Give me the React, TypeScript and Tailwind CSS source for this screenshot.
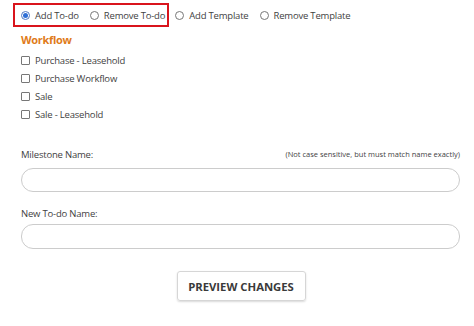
import React from "react";

function Radio({ label, checked }: { label: string; checked?: boolean }) {
  return (
    <label className="flex items-center gap-[5px]">
      <span
        className={
          checked
            ? "w-[9px] h-[9px] rounded-full border border-[#4f78c4] flex items-center justify-center bg-white"
            : "w-[9px] h-[9px] rounded-full border border-[#777] flex items-center justify-center bg-white"
        }
      >
        {checked && <span className="w-[5px] h-[5px] rounded-full bg-[#2f6fd6]" />}
      </span>
      <span>{label}</span>
    </label>
  );
}

function Check({ label }: { label: string }) {
  return (
    <div className="flex items-center gap-[5px] h-[18px]">
      <span className="w-[9px] h-[9px] border border-[#777] rounded-[1px] bg-white" />
      <span>{label}</span>
    </div>
  );
}

export default function App() {
  return (
    <div
      className="w-[474px] h-[326px] bg-white text-[#3f3f3f] text-[9.5px] leading-[15px] tracking-[-0.2px] relative overflow-hidden"
      style={{ fontFamily: '"Open Sans", "Noto Sans", sans-serif' }}
    >
      <div className="flex items-center pt-[3px] pl-[13px] gap-[6px]">
        <div className="flex items-center gap-[11px] border-2 border-[#d9141c] h-[24px] pl-[6px] pr-[2px]">
          <Radio label="Add To-do" checked />
          <Radio label="Remove To-do" />
        </div>
        <div className="flex items-center gap-[11px]">
          <Radio label="Add Template" />
          <Radio label="Remove Template" />
        </div>
      </div>
      <div className="pl-[21px] pr-[14px]">
        <div className="text-[#e07b1a] font-bold text-[11px] tracking-[-0.3px] mt-[4px] leading-[18px]">Workflow</div>
        <div className="mt-[2px]">
          <Check label="Purchase - Leasehold" />
          <Check label="Purchase Workflow" />
          <Check label="Sale" />
          <Check label="Sale - Leasehold" />
        </div>
        <div className="flex items-center justify-between mt-[24px] h-[15px]">
          <span>Milestone Name:</span>
          <span className="text-[7.5px] tracking-normal">(Not case sensitive, but must match name exactly)</span>
        </div>
        <div className="mt-[6px] h-[24px] w-[439px] rounded-[12px] border border-[#ccc] bg-white" />
        <div className="mt-[14px] h-[15px]">New To-do Name:</div>
        <div className="mt-[3px] h-[25px] w-[439px] rounded-[12px] border border-[#ccc] bg-white" />
        <div className="flex justify-center mt-[22px] pl-[1px]">
          <div className="w-[129px] h-[30px] border border-[#d6d6d6] rounded-[3px] shadow-[0_1px_2px_rgba(0,0,0,0.15)] flex items-center justify-center font-bold text-[11.3px] tracking-normal text-[#3a3a3a]">
            PREVIEW CHANGES
          </div>
        </div>
      </div>
    </div>
  );
}
